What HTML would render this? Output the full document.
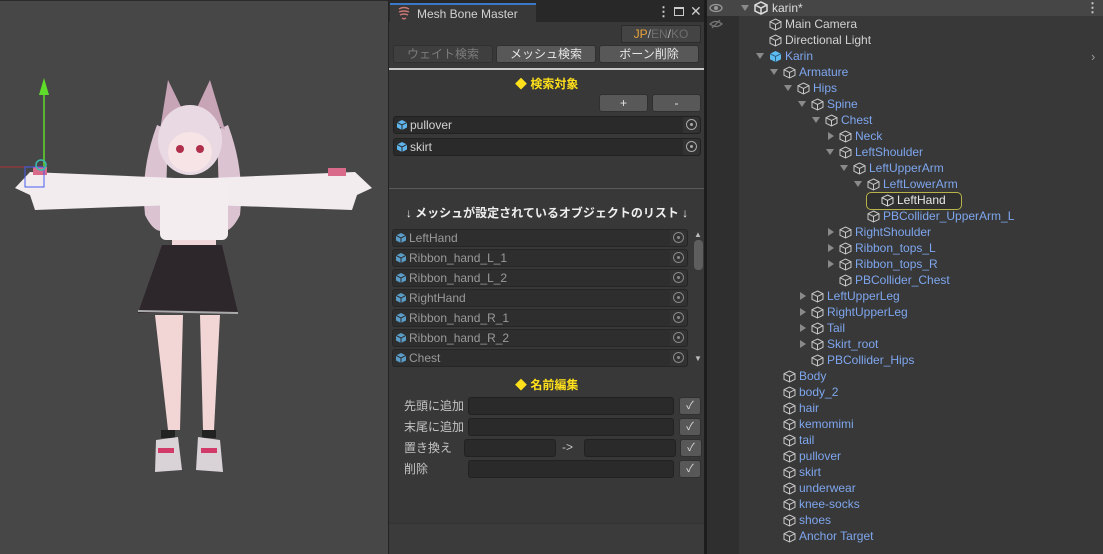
<!DOCTYPE html>
<html><head><meta charset="utf-8"><style>
*{margin:0;padding:0;box-sizing:border-box}
body{width:1103px;height:554px;overflow:hidden;background:#474747;font-family:"Liberation Sans","Noto Sans CJK JP",sans-serif;font-size:12px;position:relative}
.a{position:absolute}
.panel{left:388px;top:0;width:317px;height:554px;background:#383838;border-left:1px solid #232323}
.btn{position:absolute;height:18px;background:#585858;border:1px solid #303030;border-radius:3px;color:#e6e6e6;text-align:center;line-height:16px;font-size:12px}
.fld{position:absolute;height:18px;background:#2a2a2a;border:1px solid #212121;border-radius:3px;color:#d2d2d2;line-height:16px;font-size:12px}
.tgt{position:absolute;right:0;top:0;width:17px;height:16px;background:#323232;border-radius:0 3px 3px 0}
.tgt i{position:absolute;left:3px;top:2px;width:11px;height:11px;border:1.5px solid #aaa;border-radius:50%}
.tgt i:after{content:"";position:absolute;left:2.5px;top:2.5px;width:3px;height:3px;background:#aaa;border-radius:50%}
.li{position:absolute;left:392px;width:296px;height:18px;background:#2e2e2e;border:1px solid #262626;border-radius:3px;color:#9a9a9a;line-height:16px;font-size:12px}
.li .tgt i{border-color:#888}.li .tgt i:after{background:#888}
.mi{display:inline-block;width:10px;height:10px;vertical-align:-1px;margin:0 3px 0 3px}
.yl{color:#ffe01a;font-weight:bold;font-size:12px}
.lbl{position:absolute;color:#c4c4c4;font-size:12px}
.ck{position:absolute;width:22px;height:18px;background:#585858;border:1px solid #303030;border-radius:3px;color:#ddd;text-align:center;line-height:16px;font-size:11px}
.hr{position:absolute;height:16px;line-height:16px;font-size:12px;color:#7ea6ee;white-space:nowrap}
.hr svg{position:absolute;left:-16px;top:2px}
.hr.w{color:#d2d2d2}
.ad{position:absolute;width:0;height:0;border-left:4px solid transparent;border-right:4px solid transparent;border-top:6px solid #8a8a8a;left:-29px;top:5px}
.ar{position:absolute;width:0;height:0;border-top:4px solid transparent;border-bottom:4px solid transparent;border-left:6px solid #8a8a8a;left:-27px;top:4px}
</style></head><body>
<div class="a" style="left:0;top:0;width:388px;height:554px;background:#474747;border-top:1px solid #2a2a2a"></div>
<svg class="a" style="left:0;top:0" width="388" height="554">
 <line x1="0" y1="167" x2="40" y2="167" stroke="#a33" stroke-width="1"/>
 <line x1="44" y1="92" x2="44" y2="168" stroke="#5fdc2a" stroke-width="1.5"/>
 <polygon points="44,78 39,95 49,95" fill="#5fdc2a"/>
 <path d="M157,125 Q140,170 145,215 Q155,235 165,230 L168,130Z" fill="#dcc3d2"/>
 <path d="M228,125 Q245,170 240,215 Q230,235 220,230 L217,130Z" fill="#dcc3d2"/>
 <polygon points="160,130 168,80 185,115" fill="#c7a5b7"/>
 <polygon points="225,130 210,80 195,112" fill="#c7a5b7"/>
 <path d="M15,188 L30,172 L175,178 L175,205 L35,210 L30,195Z" fill="#f2ecef"/>
 <path d="M372,188 L355,172 L210,178 L210,205 L352,210 L357,195Z" fill="#f2ecef"/>
 <rect x="328" y="168" width="18" height="8" fill="#d96a8a"/>
 <rect x="33" y="167" width="14" height="8" fill="#d96a8a"/>
 <ellipse cx="190" cy="140" rx="32" ry="35" fill="#e9d9e2"/>
 <ellipse cx="190" cy="152" rx="22" ry="20" fill="#f7e4e6"/>
 <circle cx="180" cy="149" r="4" fill="#b0304c"/><circle cx="200" cy="149" r="4" fill="#b0304c"/>
 <rect x="160" y="178" width="68" height="62" rx="6" fill="#f3edf0"/>
 <rect x="172" y="240" width="44" height="8" fill="#f0d8da"/>
 <polygon points="162,245 222,245 238,313 138,313" fill="#2d262b"/>
 <line x1="138" y1="311" x2="238" y2="313" stroke="#aaa" stroke-width="2"/>
 <polygon points="155,315 183,315 180,430 168,430" fill="#f2d6d6"/>
 <polygon points="200,315 220,315 214,430 203,430" fill="#f2d6d6"/>
 <rect x="161" y="430" width="14" height="8" fill="#222"/><rect x="202" y="430" width="14" height="8" fill="#222"/>
 <path d="M156,440 L178,437 L182,470 L155,472Z" fill="#d9d3d8"/>
 <path d="M198,437 L220,440 L223,472 L196,470Z" fill="#d9d3d8"/>
 <rect x="158" y="448" width="16" height="5" fill="#d23a6a"/><rect x="201" y="448" width="16" height="5" fill="#d23a6a"/>
 <rect x="25" y="167" width="19" height="20" fill="none" stroke="#4a5ef0" stroke-width="1"/>
 <circle cx="41" cy="165" r="5" fill="none" stroke="#3bbcb0" stroke-width="1.5"/>
</svg>

<div class="a panel">
 <div class="a" style="left:0;top:0;width:317px;height:22px;background:#282828"></div>
 <div class="a" style="left:1px;top:3px;width:146px;height:20px;background:#383838;border-top:2px solid #3a79c8"></div>
 <svg class="a" style="left:8px;top:6px" width="14" height="14"><path d="M2,3 Q7,0 12,3 M2,6 Q7,4 12,6 M3,9 Q7,7 11,9 M5,12 L7,13 L9,12" stroke="#c77" fill="none" stroke-width="1.4"/></svg>
 <div class="a" style="left:28px;top:7px;color:#d2d2d2;font-size:12px">Mesh Bone Master</div>
 <div class="a" style="left:268px;top:4px;color:#ccc;font-size:13px;font-weight:bold">⋮</div>
 <div class="a" style="left:285px;top:7px;width:10px;height:9px;border:1px solid #ccc;border-top-width:2px"></div>
 <div class="a" style="left:301px;top:3px;color:#ccc;font-size:14px">✕</div>
 <div class="a" style="left:232px;top:25px;width:80px;height:18px;background:#444;border:1px solid #2b2b2b;border-radius:2px;text-align:center;line-height:16px;font-size:12px"><span style="color:#e8a33a">JP</span><span style="color:#bbb">/</span><span style="color:#6e6e6e">EN</span><span style="color:#bbb">/</span><span style="color:#6e6e6e">KO</span></div>
 <div class="btn" style="left:4px;top:45px;width:100px;background:#3f3f3f;color:#7c7c7c">ウェイト検索</div>
 <div class="btn" style="left:107px;top:45px;width:100px">メッシュ検索</div>
 <div class="btn" style="left:210px;top:45px;width:100px">ボーン削除</div>
 <div class="a" style="left:0;top:68px;width:316px;height:2px;background:#c8c8c8"></div>
 <div class="a yl" style="left:126px;top:75px">◆ 検索対象</div>
 <div class="btn" style="left:210px;top:94px;width:49px">+</div>
 <div class="btn" style="left:263px;top:94px;width:49px">-</div>
 <div class="fld" style="left:4px;top:116px;width:308px"><svg class="mi" viewBox="0 0 10 10"><path d="M5,0 L10,2.5 L10,7.5 L5,10 L0,7.5 L0,2.5Z" fill="#5fb4ec"/><path d="M0,2.5 L5,5 L10,2.5 M5,5 L5,10" stroke="#2a2a2a" fill="none"/></svg>pullover<span class="tgt"><i></i></span></div>
 <div class="fld" style="left:4px;top:138px;width:308px"><svg class="mi" viewBox="0 0 10 10"><path d="M5,0 L10,2.5 L10,7.5 L5,10 L0,7.5 L0,2.5Z" fill="#5fb4ec"/><path d="M0,2.5 L5,5 L10,2.5 M5,5 L5,10" stroke="#2a2a2a" fill="none"/></svg>skirt<span class="tgt"><i></i></span></div>
 <div class="a" style="left:0;top:188px;width:316px;height:1px;background:#5a5a5a"></div>
 <div class="a" style="left:0;top:204px;width:316px;text-align:center;color:#eee;font-weight:bold;font-size:12px">↓ メッシュが設定されているオブジェクトのリスト ↓</div>
 <div class="a" style="left:305px;top:240px;width:9px;height:30px;background:#5e5e5e;border-radius:4px"></div>
 <div class="a" style="left:305px;top:230px;color:#bbb;font-size:8px">▲</div>
 <div class="a" style="left:305px;top:354px;color:#bbb;font-size:8px">▼</div>
 <div class="a yl" style="left:126px;top:376px">◆ 名前編集</div>
 <div class="lbl" style="left:15px;top:397px">先頭に追加</div>
 <div class="fld" style="left:79px;top:397px;width:206px"></div><div class="ck" style="left:290px;top:397px">✓</div>
 <div class="lbl" style="left:15px;top:418px">末尾に追加</div>
 <div class="fld" style="left:79px;top:418px;width:206px"></div><div class="ck" style="left:290px;top:418px">✓</div>
 <div class="lbl" style="left:15px;top:439px">置き換え</div>
 <div class="fld" style="left:75px;top:439px;width:92px"></div>
 <div class="lbl" style="left:173px;top:440px">-&gt;</div>
 <div class="fld" style="left:195px;top:439px;width:92px"></div><div class="ck" style="left:291px;top:439px">✓</div>
 <div class="lbl" style="left:15px;top:460px">削除</div>
 <div class="fld" style="left:79px;top:460px;width:206px"></div><div class="ck" style="left:290px;top:460px">✓</div>
 <div class="a" style="left:0;top:523px;width:316px;height:31px;background:#3b3b3b;border-top:1px solid #333"></div>
</div>
<div class="li" style="top:229px"><svg class="mi" viewBox="0 0 10 10"><path d="M5,0 L10,2.5 L10,7.5 L5,10 L0,7.5 L0,2.5Z" fill="#5a9cc8"/><path d="M0,2.5 L5,5 L10,2.5 M5,5 L5,10" stroke="#2a2a2a" fill="none"/></svg>LeftHand<span class="tgt"><i></i></span></div>
<div class="li" style="top:249px"><svg class="mi" viewBox="0 0 10 10"><path d="M5,0 L10,2.5 L10,7.5 L5,10 L0,7.5 L0,2.5Z" fill="#5a9cc8"/><path d="M0,2.5 L5,5 L10,2.5 M5,5 L5,10" stroke="#2a2a2a" fill="none"/></svg>Ribbon_hand_L_1<span class="tgt"><i></i></span></div>
<div class="li" style="top:269px"><svg class="mi" viewBox="0 0 10 10"><path d="M5,0 L10,2.5 L10,7.5 L5,10 L0,7.5 L0,2.5Z" fill="#5a9cc8"/><path d="M0,2.5 L5,5 L10,2.5 M5,5 L5,10" stroke="#2a2a2a" fill="none"/></svg>Ribbon_hand_L_2<span class="tgt"><i></i></span></div>
<div class="li" style="top:289px"><svg class="mi" viewBox="0 0 10 10"><path d="M5,0 L10,2.5 L10,7.5 L5,10 L0,7.5 L0,2.5Z" fill="#5a9cc8"/><path d="M0,2.5 L5,5 L10,2.5 M5,5 L5,10" stroke="#2a2a2a" fill="none"/></svg>RightHand<span class="tgt"><i></i></span></div>
<div class="li" style="top:309px"><svg class="mi" viewBox="0 0 10 10"><path d="M5,0 L10,2.5 L10,7.5 L5,10 L0,7.5 L0,2.5Z" fill="#5a9cc8"/><path d="M0,2.5 L5,5 L10,2.5 M5,5 L5,10" stroke="#2a2a2a" fill="none"/></svg>Ribbon_hand_R_1<span class="tgt"><i></i></span></div>
<div class="li" style="top:329px"><svg class="mi" viewBox="0 0 10 10"><path d="M5,0 L10,2.5 L10,7.5 L5,10 L0,7.5 L0,2.5Z" fill="#5a9cc8"/><path d="M0,2.5 L5,5 L10,2.5 M5,5 L5,10" stroke="#2a2a2a" fill="none"/></svg>Ribbon_hand_R_2<span class="tgt"><i></i></span></div>
<div class="li" style="top:349px"><svg class="mi" viewBox="0 0 10 10"><path d="M5,0 L10,2.5 L10,7.5 L5,10 L0,7.5 L0,2.5Z" fill="#5a9cc8"/><path d="M0,2.5 L5,5 L10,2.5 M5,5 L5,10" stroke="#2a2a2a" fill="none"/></svg>Chest<span class="tgt"><i></i></span></div>

<div class="a" style="left:704px;top:0;width:3px;height:554px;background:#1c1c1c"></div>
<div class="a" style="left:707px;top:0;width:32px;height:554px;background:#2f2f2f"></div>
<div class="a" style="left:739px;top:0;width:364px;height:554px;background:#383838"></div>
<div class="a" style="left:707px;top:0;width:396px;height:16px;background:#464646"></div>
<svg class="a" style="left:709px;top:3px" width="16" height="10"><ellipse cx="7" cy="5" rx="6" ry="3.5" fill="none" stroke="#999" stroke-width="1.3"/><circle cx="7" cy="5" r="2" fill="#999"/></svg>
<svg class="a" style="left:709px;top:19px" width="14" height="10"><path d="M1,5 Q7,0 13,5 Q7,10 1,5Z M3,9 L11,1" fill="none" stroke="#777" stroke-width="1.2"/></svg>
<div class="ad" style="left:741px;top:5px"></div>
<svg class="a" style="left:754px;top:1px" width="14" height="14"><path d="M7,1 L13,4 L13,10 L7,13 L1,10 L1,4Z M1,4 L7,7 L13,4 M7,7 L7,13" fill="none" stroke="#ddd" stroke-width="1.5"/></svg>
<div class="a" style="left:772px;top:1px;color:#ddd;font-size:12px">karin*</div>
<div class="a" style="left:1086px;top:0;color:#ccc;font-weight:bold;font-size:13px">⋮</div>
<div class="a" style="left:1091px;top:49px;color:#999;font-size:13px">›</div>
<div class="a" style="left:866px;top:192px;width:96px;height:18px;border:1.5px solid #b8b24a;border-radius:5px;background:#2f2f2f"></div>

<div class="hr w" style="left:785px;top:16px"><svg width="13" height="13"><path d="M6.5,1 L12,3.7 L12,9.3 L6.5,12 L1,9.3 L1,3.7Z M1,3.7 L6.5,6.4 L12,3.7 M6.5,6.4 L6.5,12" fill="none" stroke="#c8c8c8"/></svg>Main Camera</div>
<div class="hr w" style="left:785px;top:32px"><svg width="13" height="13"><path d="M6.5,1 L12,3.7 L12,9.3 L6.5,12 L1,9.3 L1,3.7Z M1,3.7 L6.5,6.4 L12,3.7 M6.5,6.4 L6.5,12" fill="none" stroke="#c8c8c8"/></svg>Directional Light</div>
<div class="hr" style="left:785px;top:48px"><i class="ad"></i><svg width="13" height="13"><path d="M6.5,1 L12,3.7 L12,9.3 L6.5,12 L1,9.3 L1,3.7Z" fill="#5cbcf2"/><path d="M1,3.7 L6.5,6.4 L12,3.7 M6.5,6.4 L6.5,12" fill="none" stroke="#2a5f80"/></svg>Karin</div>
<div class="hr" style="left:799px;top:64px"><i class="ad"></i><svg width="13" height="13"><path d="M6.5,1 L12,3.7 L12,9.3 L6.5,12 L1,9.3 L1,3.7Z M1,3.7 L6.5,6.4 L12,3.7 M6.5,6.4 L6.5,12" fill="none" stroke="#c8c8c8"/></svg>Armature</div>
<div class="hr" style="left:813px;top:80px"><i class="ad"></i><svg width="13" height="13"><path d="M6.5,1 L12,3.7 L12,9.3 L6.5,12 L1,9.3 L1,3.7Z M1,3.7 L6.5,6.4 L12,3.7 M6.5,6.4 L6.5,12" fill="none" stroke="#c8c8c8"/></svg>Hips</div>
<div class="hr" style="left:827px;top:96px"><i class="ad"></i><svg width="13" height="13"><path d="M6.5,1 L12,3.7 L12,9.3 L6.5,12 L1,9.3 L1,3.7Z M1,3.7 L6.5,6.4 L12,3.7 M6.5,6.4 L6.5,12" fill="none" stroke="#c8c8c8"/></svg>Spine</div>
<div class="hr" style="left:841px;top:112px"><i class="ad"></i><svg width="13" height="13"><path d="M6.5,1 L12,3.7 L12,9.3 L6.5,12 L1,9.3 L1,3.7Z M1,3.7 L6.5,6.4 L12,3.7 M6.5,6.4 L6.5,12" fill="none" stroke="#c8c8c8"/></svg>Chest</div>
<div class="hr" style="left:855px;top:128px"><i class="ar"></i><svg width="13" height="13"><path d="M6.5,1 L12,3.7 L12,9.3 L6.5,12 L1,9.3 L1,3.7Z M1,3.7 L6.5,6.4 L12,3.7 M6.5,6.4 L6.5,12" fill="none" stroke="#c8c8c8"/></svg>Neck</div>
<div class="hr" style="left:855px;top:144px"><i class="ad"></i><svg width="13" height="13"><path d="M6.5,1 L12,3.7 L12,9.3 L6.5,12 L1,9.3 L1,3.7Z M1,3.7 L6.5,6.4 L12,3.7 M6.5,6.4 L6.5,12" fill="none" stroke="#c8c8c8"/></svg>LeftShoulder</div>
<div class="hr" style="left:869px;top:160px"><i class="ad"></i><svg width="13" height="13"><path d="M6.5,1 L12,3.7 L12,9.3 L6.5,12 L1,9.3 L1,3.7Z M1,3.7 L6.5,6.4 L12,3.7 M6.5,6.4 L6.5,12" fill="none" stroke="#c8c8c8"/></svg>LeftUpperArm</div>
<div class="hr" style="left:883px;top:176px"><i class="ad"></i><svg width="13" height="13"><path d="M6.5,1 L12,3.7 L12,9.3 L6.5,12 L1,9.3 L1,3.7Z M1,3.7 L6.5,6.4 L12,3.7 M6.5,6.4 L6.5,12" fill="none" stroke="#c8c8c8"/></svg>LeftLowerArm</div>
<div class="hr w" style="left:897px;top:192px;color:#e8e8e8"><svg width="13" height="13"><path d="M6.5,1 L12,3.7 L12,9.3 L6.5,12 L1,9.3 L1,3.7Z M1,3.7 L6.5,6.4 L12,3.7 M6.5,6.4 L6.5,12" fill="none" stroke="#d8d8d8"/></svg>LeftHand</div>
<div class="hr" style="left:883px;top:208px"><svg width="13" height="13"><path d="M6.5,1 L12,3.7 L12,9.3 L6.5,12 L1,9.3 L1,3.7Z M1,3.7 L6.5,6.4 L12,3.7 M6.5,6.4 L6.5,12" fill="none" stroke="#c8c8c8"/></svg>PBCollider_UpperArm_L</div>
<div class="hr" style="left:855px;top:224px"><i class="ar"></i><svg width="13" height="13"><path d="M6.5,1 L12,3.7 L12,9.3 L6.5,12 L1,9.3 L1,3.7Z M1,3.7 L6.5,6.4 L12,3.7 M6.5,6.4 L6.5,12" fill="none" stroke="#c8c8c8"/></svg>RightShoulder</div>
<div class="hr" style="left:855px;top:240px"><i class="ar"></i><svg width="13" height="13"><path d="M6.5,1 L12,3.7 L12,9.3 L6.5,12 L1,9.3 L1,3.7Z M1,3.7 L6.5,6.4 L12,3.7 M6.5,6.4 L6.5,12" fill="none" stroke="#c8c8c8"/></svg>Ribbon_tops_L</div>
<div class="hr" style="left:855px;top:256px"><i class="ar"></i><svg width="13" height="13"><path d="M6.5,1 L12,3.7 L12,9.3 L6.5,12 L1,9.3 L1,3.7Z M1,3.7 L6.5,6.4 L12,3.7 M6.5,6.4 L6.5,12" fill="none" stroke="#c8c8c8"/></svg>Ribbon_tops_R</div>
<div class="hr" style="left:855px;top:272px"><svg width="13" height="13"><path d="M6.5,1 L12,3.7 L12,9.3 L6.5,12 L1,9.3 L1,3.7Z M1,3.7 L6.5,6.4 L12,3.7 M6.5,6.4 L6.5,12" fill="none" stroke="#c8c8c8"/></svg>PBCollider_Chest</div>
<div class="hr" style="left:827px;top:288px"><i class="ar"></i><svg width="13" height="13"><path d="M6.5,1 L12,3.7 L12,9.3 L6.5,12 L1,9.3 L1,3.7Z M1,3.7 L6.5,6.4 L12,3.7 M6.5,6.4 L6.5,12" fill="none" stroke="#c8c8c8"/></svg>LeftUpperLeg</div>
<div class="hr" style="left:827px;top:304px"><i class="ar"></i><svg width="13" height="13"><path d="M6.5,1 L12,3.7 L12,9.3 L6.5,12 L1,9.3 L1,3.7Z M1,3.7 L6.5,6.4 L12,3.7 M6.5,6.4 L6.5,12" fill="none" stroke="#c8c8c8"/></svg>RightUpperLeg</div>
<div class="hr" style="left:827px;top:320px"><i class="ar"></i><svg width="13" height="13"><path d="M6.5,1 L12,3.7 L12,9.3 L6.5,12 L1,9.3 L1,3.7Z M1,3.7 L6.5,6.4 L12,3.7 M6.5,6.4 L6.5,12" fill="none" stroke="#c8c8c8"/></svg>Tail</div>
<div class="hr" style="left:827px;top:336px"><i class="ar"></i><svg width="13" height="13"><path d="M6.5,1 L12,3.7 L12,9.3 L6.5,12 L1,9.3 L1,3.7Z M1,3.7 L6.5,6.4 L12,3.7 M6.5,6.4 L6.5,12" fill="none" stroke="#c8c8c8"/></svg>Skirt_root</div>
<div class="hr" style="left:827px;top:352px"><svg width="13" height="13"><path d="M6.5,1 L12,3.7 L12,9.3 L6.5,12 L1,9.3 L1,3.7Z M1,3.7 L6.5,6.4 L12,3.7 M6.5,6.4 L6.5,12" fill="none" stroke="#c8c8c8"/></svg>PBCollider_Hips</div>
<div class="hr" style="left:799px;top:368px"><svg width="13" height="13"><path d="M6.5,1 L12,3.7 L12,9.3 L6.5,12 L1,9.3 L1,3.7Z M1,3.7 L6.5,6.4 L12,3.7 M6.5,6.4 L6.5,12" fill="none" stroke="#c8c8c8"/></svg>Body</div>
<div class="hr" style="left:799px;top:384px"><svg width="13" height="13"><path d="M6.5,1 L12,3.7 L12,9.3 L6.5,12 L1,9.3 L1,3.7Z M1,3.7 L6.5,6.4 L12,3.7 M6.5,6.4 L6.5,12" fill="none" stroke="#c8c8c8"/></svg>body_2</div>
<div class="hr" style="left:799px;top:400px"><svg width="13" height="13"><path d="M6.5,1 L12,3.7 L12,9.3 L6.5,12 L1,9.3 L1,3.7Z M1,3.7 L6.5,6.4 L12,3.7 M6.5,6.4 L6.5,12" fill="none" stroke="#c8c8c8"/></svg>hair</div>
<div class="hr" style="left:799px;top:416px"><svg width="13" height="13"><path d="M6.5,1 L12,3.7 L12,9.3 L6.5,12 L1,9.3 L1,3.7Z M1,3.7 L6.5,6.4 L12,3.7 M6.5,6.4 L6.5,12" fill="none" stroke="#c8c8c8"/></svg>kemomimi</div>
<div class="hr" style="left:799px;top:432px"><svg width="13" height="13"><path d="M6.5,1 L12,3.7 L12,9.3 L6.5,12 L1,9.3 L1,3.7Z M1,3.7 L6.5,6.4 L12,3.7 M6.5,6.4 L6.5,12" fill="none" stroke="#c8c8c8"/></svg>tail</div>
<div class="hr" style="left:799px;top:448px"><svg width="13" height="13"><path d="M6.5,1 L12,3.7 L12,9.3 L6.5,12 L1,9.3 L1,3.7Z M1,3.7 L6.5,6.4 L12,3.7 M6.5,6.4 L6.5,12" fill="none" stroke="#c8c8c8"/></svg>pullover</div>
<div class="hr" style="left:799px;top:464px"><svg width="13" height="13"><path d="M6.5,1 L12,3.7 L12,9.3 L6.5,12 L1,9.3 L1,3.7Z M1,3.7 L6.5,6.4 L12,3.7 M6.5,6.4 L6.5,12" fill="none" stroke="#c8c8c8"/></svg>skirt</div>
<div class="hr" style="left:799px;top:480px"><svg width="13" height="13"><path d="M6.5,1 L12,3.7 L12,9.3 L6.5,12 L1,9.3 L1,3.7Z M1,3.7 L6.5,6.4 L12,3.7 M6.5,6.4 L6.5,12" fill="none" stroke="#c8c8c8"/></svg>underwear</div>
<div class="hr" style="left:799px;top:496px"><svg width="13" height="13"><path d="M6.5,1 L12,3.7 L12,9.3 L6.5,12 L1,9.3 L1,3.7Z M1,3.7 L6.5,6.4 L12,3.7 M6.5,6.4 L6.5,12" fill="none" stroke="#c8c8c8"/></svg>knee-socks</div>
<div class="hr" style="left:799px;top:512px"><svg width="13" height="13"><path d="M6.5,1 L12,3.7 L12,9.3 L6.5,12 L1,9.3 L1,3.7Z M1,3.7 L6.5,6.4 L12,3.7 M6.5,6.4 L6.5,12" fill="none" stroke="#c8c8c8"/></svg>shoes</div>
<div class="hr" style="left:799px;top:528px"><svg width="13" height="13"><path d="M6.5,1 L12,3.7 L12,9.3 L6.5,12 L1,9.3 L1,3.7Z M1,3.7 L6.5,6.4 L12,3.7 M6.5,6.4 L6.5,12" fill="none" stroke="#c8c8c8"/></svg>Anchor Target</div>
</body></html>
